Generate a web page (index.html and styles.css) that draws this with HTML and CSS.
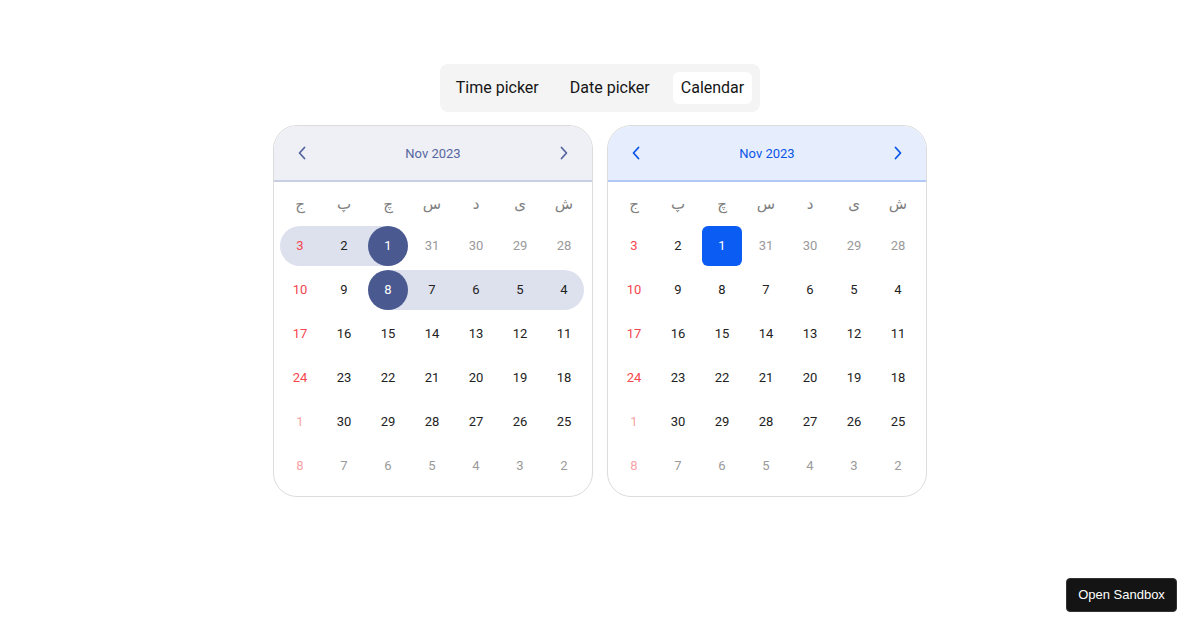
FILE: index.html
```html
<!DOCTYPE html>
<html lang="en">
<head>
<meta charset="utf-8">
<link rel="stylesheet" href="styles.css">
</head>
<body>
<div class="page">
  <div class="tabs">
    <div class="tab">Time picker</div>
    <div class="tab">Date picker</div>
    <div class="tab active">Calendar</div>
  </div>
  <div class="cals">
    <div class="cal cal-range">
      <div class="cal-head">
        <svg class="chev" viewBox="0 0 8 14" width="8" height="14"><path d="M6.5 1.5 1.5 7l5 5.5"/></svg>
        <div class="title">Nov 2023</div>
        <svg class="chev" viewBox="0 0 8 14" width="8" height="14"><path d="M1.5 1.5 6.5 7l-5 5.5"/></svg>
      </div>
      <div class="grid">
        <div class="wd">ش</div><div class="wd">ی</div><div class="wd">د</div><div class="wd">س</div><div class="wd">چ</div><div class="wd">پ</div><div class="wd">ج</div>
        <div class="d out">28</div><div class="d out">29</div><div class="d out">30</div><div class="d out">31</div>
        <div class="d end end-l"><span class="dot">1</span></div><div class="d rng bl">2</div><div class="d rng bl row-l fri">3</div>
        <div class="d rng br row-r">4</div><div class="d rng br">5</div><div class="d rng br">6</div><div class="d rng br">7</div>
        <div class="d end end-r"><span class="dot">8</span></div><div class="d">9</div><div class="d fri">10</div>
        <div class="d">11</div><div class="d">12</div><div class="d">13</div><div class="d">14</div><div class="d">15</div><div class="d">16</div><div class="d fri">17</div>
        <div class="d">18</div><div class="d">19</div><div class="d">20</div><div class="d">21</div><div class="d">22</div><div class="d">23</div><div class="d fri">24</div>
        <div class="d">25</div><div class="d">26</div><div class="d">27</div><div class="d">28</div><div class="d">29</div><div class="d">30</div><div class="d out fri-out">1</div>
        <div class="d out">2</div><div class="d out">3</div><div class="d out">4</div><div class="d out">5</div><div class="d out">6</div><div class="d out">7</div><div class="d out fri-out">8</div>
      </div>
    </div>
    <div class="cal cal-blue">
      <div class="cal-head">
        <svg class="chev" viewBox="0 0 8 14" width="8" height="14"><path d="M6.5 1.5 1.5 7l5 5.5"/></svg>
        <div class="title">Nov 2023</div>
        <svg class="chev" viewBox="0 0 8 14" width="8" height="14"><path d="M1.5 1.5 6.5 7l-5 5.5"/></svg>
      </div>
      <div class="grid">
        <div class="wd">ش</div><div class="wd">ی</div><div class="wd">د</div><div class="wd">س</div><div class="wd">چ</div><div class="wd">پ</div><div class="wd">ج</div>
        <div class="d out">28</div><div class="d out">29</div><div class="d out">30</div><div class="d out">31</div>
        <div class="d sel">1</div><div class="d">2</div><div class="d fri">3</div>
        <div class="d">4</div><div class="d">5</div><div class="d">6</div><div class="d">7</div><div class="d">8</div><div class="d">9</div><div class="d fri">10</div>
        <div class="d">11</div><div class="d">12</div><div class="d">13</div><div class="d">14</div><div class="d">15</div><div class="d">16</div><div class="d fri">17</div>
        <div class="d">18</div><div class="d">19</div><div class="d">20</div><div class="d">21</div><div class="d">22</div><div class="d">23</div><div class="d fri">24</div>
        <div class="d">25</div><div class="d">26</div><div class="d">27</div><div class="d">28</div><div class="d">29</div><div class="d">30</div><div class="d out fri-out">1</div>
        <div class="d out">2</div><div class="d out">3</div><div class="d out">4</div><div class="d out">5</div><div class="d out">6</div><div class="d out">7</div><div class="d out fri-out">8</div>
      </div>
    </div>
  </div>
</div>
<button class="sandbox">Open Sandbox</button>
</body>
</html>
```

FILE: styles.css
```css
html, body {
  margin: 0;
  padding: 0;
  background: #fff;
  font-family: Roboto, "DejaVu Sans", sans-serif;
}
.page {
  display: flex;
  flex-direction: column;
  align-items: center;
  padding-top: 64px;
  gap: 13px;
}
.tabs {
  display: flex;
  gap: 15px;
  background: #f4f4f4;
  border-radius: 8px;
  padding: 8px;
}
.tab {
  height: 32px;
  line-height: 31px;
  padding: 0 8px;
  font-size: 16px;
  color: #161616;
  border-radius: 6px;
}
.tab.active { background: #fff; }
.cals {
  display: flex;
  gap: 14px;
}
.cal {
  width: 318px;
  border: 1px solid #dcdcdc;
  border-radius: 24px;
  overflow: hidden;
  padding-bottom: 10px;
}
.cal-head {
  height: 54px;
  display: flex;
  align-items: center;
  justify-content: space-between;
  padding: 0 24px;
  border-bottom: 2px solid;
}
.cal-range .cal-head { background: #eef0f6; border-color: #c9cfe3; color: #5866a0; }
.cal-blue .cal-head { background: #e6eefd; border-color: #b2c8f7; color: #0b55e6; }
.title { font-size: 13px; }
.chev { fill: none; stroke: currentColor; stroke-width: 1.8; stroke-linecap: round; stroke-linejoin: round; }
.grid {
  direction: rtl;
  display: grid;
  grid-template-columns: repeat(7, 40px);
  grid-auto-rows: 40px;
  gap: 4px;
  padding: 0 8px 0 6px;
}
.wd {
  display: flex;
  align-items: center;
  justify-content: center;
  font-family: "DejaVu Sans", sans-serif;
  font-size: 15px;
  color: #808080;
  padding-top: 3px;
  box-sizing: border-box;
}
.d {
  display: flex;
  align-items: center;
  justify-content: center;
  font-size: 13px;
  line-height: 1;
  padding-bottom: 1px;
  box-sizing: border-box;
  color: #222;
  position: relative;
}
.d.out { color: #9a9a9a; }
.d.fri { color: #f5454e; }
.d.fri-out { color: #f6a3a6; }
.rng { background: #dde0ed; }
.rng.bl { box-shadow: 4px 0 0 #dde0ed; }
.rng.br { box-shadow: -4px 0 0 #dde0ed; }
.rng.row-l { border-radius: 20px 0 0 20px; }
.rng.row-r { border-radius: 0 20px 20px 0; }
.end-l { background: linear-gradient(to right, #dde0ed 50%, transparent 50%); padding-bottom: 0; }
.end-r { background: linear-gradient(to left, #dde0ed 50%, transparent 50%); padding-bottom: 0; }
.dot {
  width: 40px;
  height: 40px;
  border-radius: 50%;
  background: #4a5a90;
  color: #fff;
  display: flex;
  align-items: center;
  justify-content: center;
  padding-bottom: 1px;
  box-sizing: border-box;
}
.sel {
  background: #0b5cf2;
  color: #fff;
  border-radius: 6px;
}
.sandbox {
  position: fixed;
  right: 23px;
  bottom: 18px;
  width: 111px;
  height: 34px;
  background: #141414;
  color: #fff;
  border: 1px solid #333;
  border-radius: 4px;
  font-family: "Liberation Sans", Arial, sans-serif;
  font-size: 13px;
  padding: 0 0 2px;
}
```
